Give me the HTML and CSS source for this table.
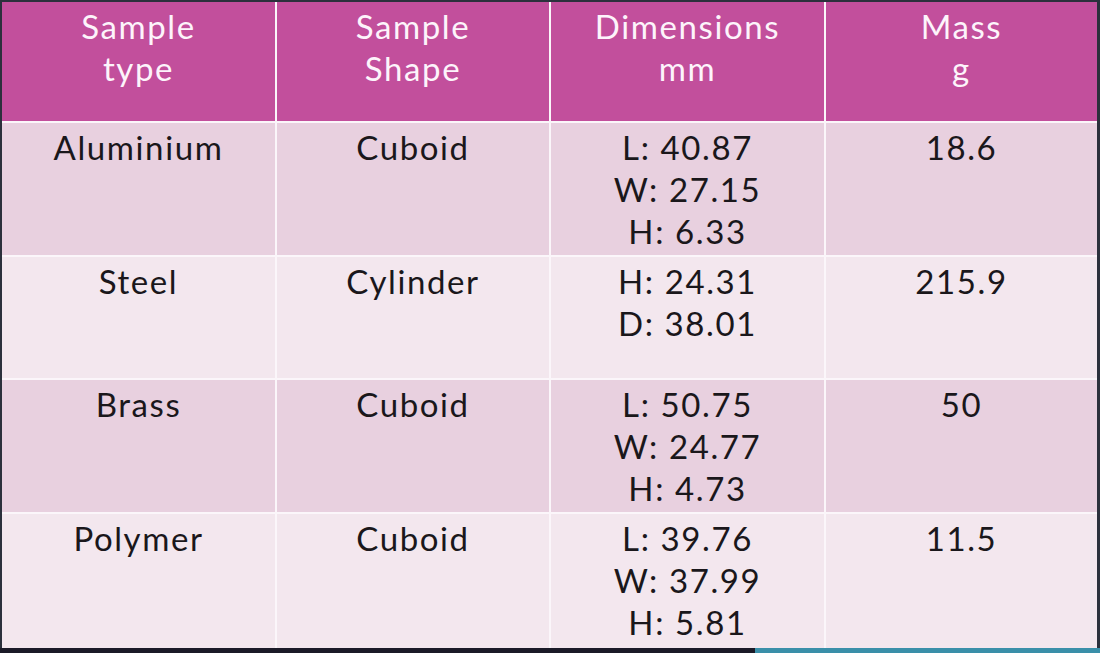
FILE: index.html
```html
<!DOCTYPE html>
<html>
<head>
<meta charset="utf-8">
<link rel="stylesheet" href="styles.css">
</head>
<body>
<div class="frame">
  <div class="table">
    <div class="cell head">Sample<br>type</div>
    <div class="cell head">Sample<br>Shape</div>
    <div class="cell head">Dimensions<br>mm</div>
    <div class="cell head">Mass<br>g</div>

    <div class="cell odd">Aluminium</div>
    <div class="cell odd">Cuboid</div>
    <div class="cell odd">L: 40.87<br>W: 27.15<br>H: 6.33</div>
    <div class="cell odd">18.6</div>

    <div class="cell even">Steel</div>
    <div class="cell even">Cylinder</div>
    <div class="cell even">H: 24.31<br>D: 38.01</div>
    <div class="cell even">215.9</div>

    <div class="cell odd">Brass</div>
    <div class="cell odd">Cuboid</div>
    <div class="cell odd">L: 50.75<br>W: 24.77<br>H: 4.73</div>
    <div class="cell odd">50</div>

    <div class="cell even">Polymer</div>
    <div class="cell even">Cuboid</div>
    <div class="cell even">L: 39.76<br>W: 37.99<br>H: 5.81</div>
    <div class="cell even">11.5</div>
  </div>
</div>
<div class="bottom">
  <div class="bottom-dark"></div>
  <div class="bottom-teal"></div>
</div>
</body>
</html>
```
FILE: styles.css
```css
html, body {
  margin: 0;
  padding: 0;
}
body {
  width: 1100px;
  height: 653px;
  overflow: hidden;
  background: #2b303c;
  font-family: "Lato", "Noto Sans", sans-serif;
}
.frame {
  padding: 2px 3px 0 2px;
}
.table {
  display: grid;
  grid-template-columns: 273px 272px 273px 271px;
  grid-template-rows: 119px 132px 121px 132px 134px;
  gap: 2px;
  background: #fbf6fa;
  width: 1095px;
}
.cell {
  text-align: center;
  font-size: 33px;
  font-weight: 400;
  line-height: 42px;
  letter-spacing: 1.6px;
  padding-top: 3px;
  color: #1a171b;
}
.head {
  background: #c24f9c;
  color: #fdf4fb;
  padding-top: 3px;
}
.odd {
  background: #e8d0df;
}
.even {
  background: #f3e7ee;
}
.bottom {
  display: flex;
  height: 5px;
}
.bottom-dark {
  width: 755px;
  background: #1b1a28;
}
.bottom-teal {
  flex: 1;
  background: #3a8fa9;
}
```
